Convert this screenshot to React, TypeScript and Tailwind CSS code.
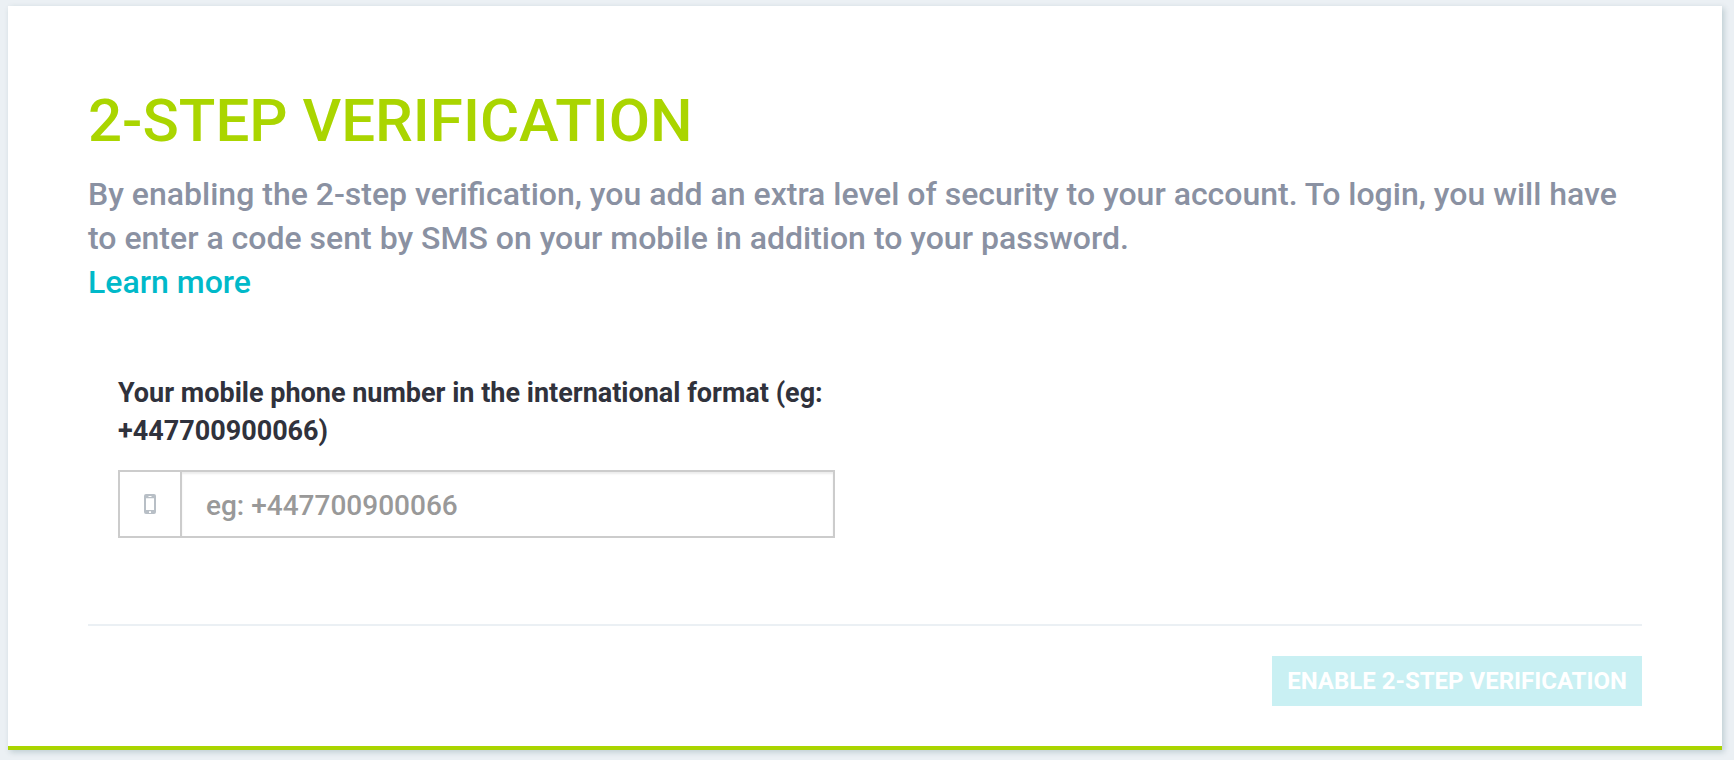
function PhoneIcon() {
  return (
    <svg width="12" height="20" viewBox="0 0 12 20" aria-hidden="true">
      <path
        fill="#b8bfc6"
        fillRule="evenodd"
        d="M2 0h8a2 2 0 0 1 2 2v16a2 2 0 0 1-2 2H2a2 2 0 0 1-2-2V2a2 2 0 0 1 2-2ZM2 4.200v11.800h8V4.200ZM4.500 2v1h3V2ZM5 17.200v1.800h2v-1.800Z"
      />
    </svg>
  );
}

export default function App() {
  return (
    <div className="min-h-screen bg-[#ebf0f4] pt-1.5 pr-3 pb-2.5 pl-2 font-[Roboto,sans-serif]">
      <main className="border-b-4 border-[#aad500] bg-white px-20 pt-20 pb-10 shadow-[2px_2px_6px_rgba(0,60,70,0.2)]">
        <h1 className="text-[60px] leading-[70px] font-medium text-[#aad500]">2-STEP VERIFICATION</h1>
        <p className="mt-4 text-[32px] leading-[44px] font-medium text-[#8a91a2]">
          By enabling the 2-step verification, you add an extra level of security to your account. To login, you will
          have to enter a code sent by SMS on your mobile in addition to your password.
          <br />
          <a href="#learn-more" className="text-[#00b9c9]">
            Learn more
          </a>
        </p>
        <form className="mt-[70px]">
          <div className="w-1/2 px-[30px]">
            <label htmlFor="phone" className="block text-[27px] leading-[38px] font-bold text-[#30323c]">
              Your mobile phone number in the international format (eg: +447700900066)
            </label>
            <div className="mt-5 flex h-[68px] border-2 border-[#ccc]">
              <span className="flex w-[62px] items-center justify-center border-r-2 border-[#ccc]">
                <PhoneIcon />
              </span>
              <input
                id="phone"
                type="tel"
                placeholder="eg: +447700900066"
                className="min-w-0 flex-1 px-6 pt-1 text-[28px] font-medium text-[#555] shadow-[inset_0_2px_2px_rgba(0,0,0,0.075)] outline-none placeholder:text-[#999]"
              />
            </div>
          </div>
          <div className="mt-[86px] flex justify-end border-t-2 border-[#ebf0f4] pt-[30px]">
            <button
              type="button"
              disabled
              className="h-[50px] bg-[#c9f0f3] px-[15px] text-[24px] font-bold text-white"
            >
              ENABLE 2-STEP VERIFICATION
            </button>
          </div>
        </form>
      </main>
    </div>
  );
}
